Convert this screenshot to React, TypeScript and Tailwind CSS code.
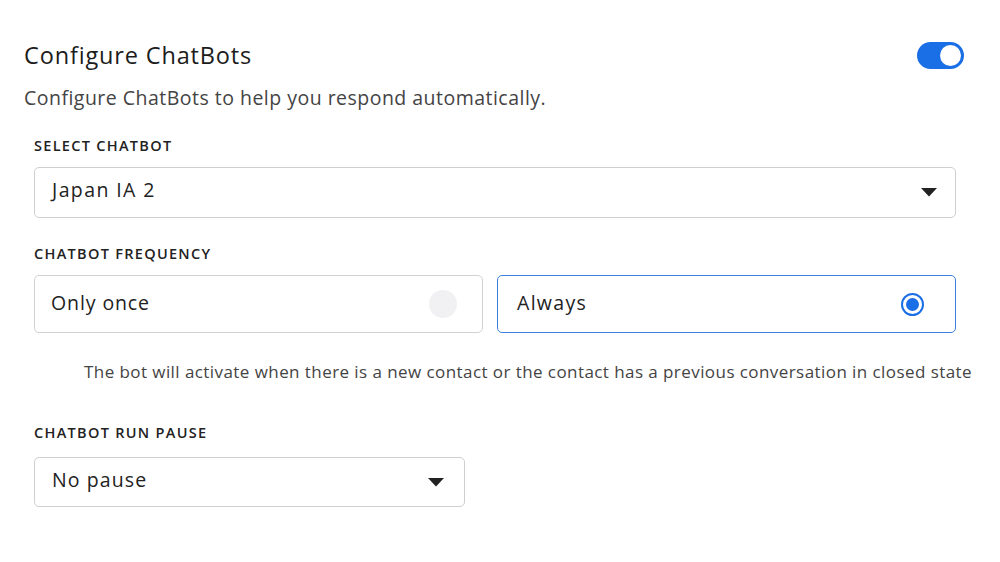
import React from "react";

const font = { fontFamily: "'Open Sans', 'Noto Sans', sans-serif" };

function Caret() {
  return (
    <svg width="16" height="9" viewBox="0 0 16 9" className="shrink-0">
      <path d="M0 0 L16 0 L8 8.5 Z" fill="#222" />
    </svg>
  );
}

export default function App() {
  return (
    <div className="w-[1000px] h-[562px] bg-white text-[#222] overflow-hidden" style={font}>
      <div className="pt-[41px] pl-6 pr-9">
        <div className="flex items-center justify-between">
          <h1 className="text-[23.5px] leading-[28px] font-medium tracking-[0.85px] text-[#1c1c1c]">Configure ChatBots</h1>
          <div className="w-[47px] h-[27px] rounded-full bg-[#1a6ee6] flex items-center justify-end pr-[3px]">
            <div className="w-[21px] h-[21px] rounded-full bg-white" />
          </div>
        </div>
        <p className="mt-[17px] text-[19.5px] leading-[24px] tracking-[0.48px] text-[#444]">
          Configure ChatBots to help you respond automatically.
        </p>
      </div>

      <div className="pl-[34px] pr-[44px]">
        <div className="mt-[27px] text-[14.5px] leading-[18px] font-semibold tracking-[1.3px] text-[#222]">SELECT CHATBOT</div>
        <div className="mt-[12px] h-[51px] border border-[#cfcfcf] rounded-[5px] flex items-center justify-between pl-[17px] pr-[18px]">
          <span className="mb-[5px] text-[19.5px] tracking-[1.4px] text-[#222]">Japan IA 2</span>
          <Caret />
        </div>

        <div className="mt-[27px] text-[14.5px] leading-[18px] font-semibold tracking-[1.3px] text-[#222]">CHATBOT FREQUENCY</div>
        <div className="mt-[12px] flex gap-[14px]">
          <div className="w-[449px] h-[58px] border border-[#d2d2d2] rounded-[5px] flex items-center justify-between pl-[16px] pr-[25px]">
            <span className="mb-[3px] text-[19.5px] tracking-[0.9px] text-[#222]">Only once</span>
            <div className="w-[28px] h-[28px] rounded-full bg-[#f1f1f3]" />
          </div>
          <div className="flex-1 h-[58px] border-[1.5px] border-[#3b7fe0] rounded-[5px] flex items-center justify-between pl-[19px] pr-[31px]">
            <span className="mb-[2px] text-[19.5px] tracking-[1.3px] text-[#222]">Always</span>
            <div className="w-[23px] h-[23px] rounded-full border-2 border-[#1a6ee6] flex items-center justify-center">
              <div className="w-[13px] h-[13px] rounded-full bg-[#1a6ee6]" />
            </div>
          </div>
        </div>

        <p className="mt-[28px] pl-[50px] whitespace-nowrap text-[17px] leading-[22px] tracking-[0.43px] text-[#444]">
          The bot will activate when there is a new contact or the contact has a previous conversation in closed state
        </p>

        <div className="mt-[41px] text-[14.5px] leading-[18px] font-semibold tracking-[1.3px] text-[#222]">CHATBOT RUN PAUSE</div>
        <div className="mt-[15px] w-[431px] h-[50px] border border-[#cfcfcf] rounded-[5px] flex items-center justify-between pl-[17px] pr-[20px]">
          <span className="mb-[4px] text-[19.5px] tracking-[1.1px] text-[#222]">No pause</span>
          <Caret />
        </div>
      </div>
    </div>
  );
}
